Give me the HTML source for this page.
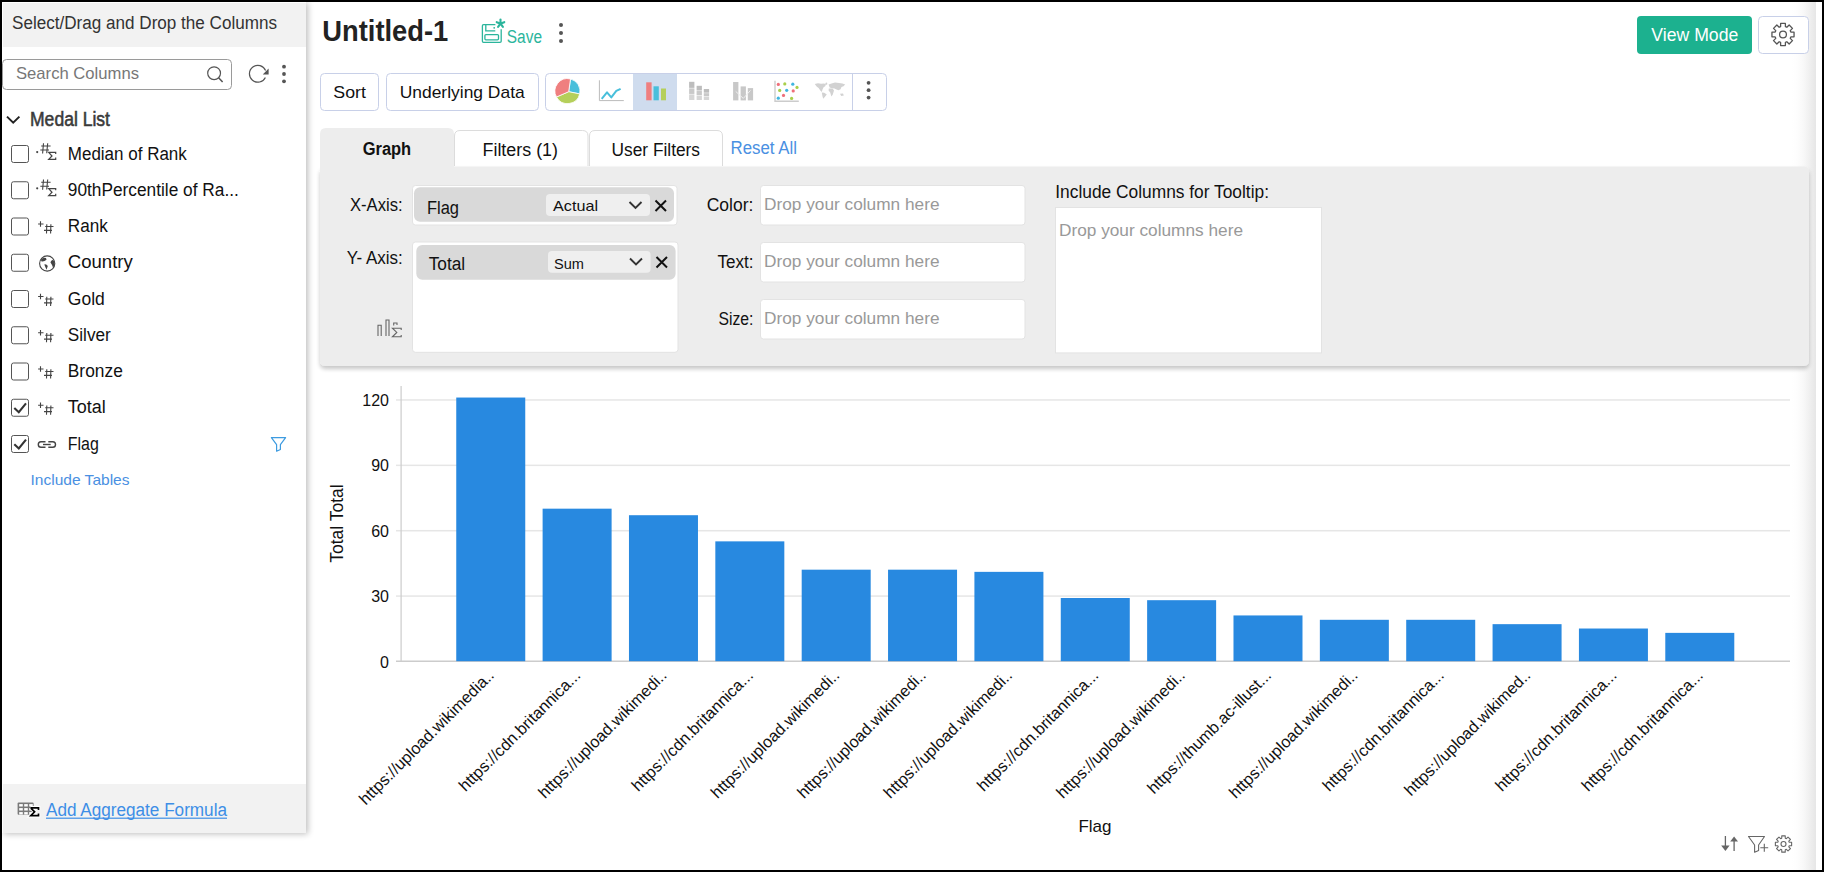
<!DOCTYPE html>
<html><head><meta charset="utf-8"><title>Untitled-1</title>
<style>html,body{margin:0;padding:0;width:1824px;height:872px;overflow:hidden;background:#000}
svg{display:block;font-family:"Liberation Sans", sans-serif}</style></head>
<body><svg width="1824" height="872" viewBox="0 0 1824 872">
<rect x="0" y="0" width="1824" height="872" rx="0" fill="#000" />
<rect x="2" y="2" width="1820" height="868" rx="0" fill="#fff" />
<defs><linearGradient id="shR" x1="0" x2="1" y1="0" y2="0"><stop offset="0" stop-color="#d6d6d6"/><stop offset="0.35" stop-color="#f2f2f2"/><stop offset="1" stop-color="#fff" stop-opacity="0"/></linearGradient><linearGradient id="shL" x1="0" x2="1" y1="0" y2="0"><stop offset="0" stop-color="#fff" stop-opacity="0"/><stop offset="0.55" stop-color="#f7f7f7"/><stop offset="1" stop-color="#e6e6e6"/></linearGradient><linearGradient id="shB" x1="0" x2="0" y1="0" y2="1"><stop offset="0" stop-color="#d0d0d0"/><stop offset="1" stop-color="#fff" stop-opacity="0"/></linearGradient></defs>
<filter id="lsh" x="-5%" y="-5%" width="115%" height="110%"><feGaussianBlur in="SourceAlpha" stdDeviation="3.2"/><feOffset dx="2" dy="1"/><feComponentTransfer><feFuncA type="linear" slope="0.26"/></feComponentTransfer><feMerge><feMergeNode/><feMergeNode in="SourceGraphic"/></feMerge></filter>
<rect x="2" y="2" width="304" height="831" rx="0" fill="#fff" filter="url(#lsh)"/>
<rect x="3" y="3" width="303" height="44" rx="0" fill="#f2f2f2" />
<text x="12" y="28.7" font-size="18" fill="#333" font-weight="normal" text-anchor="start" textLength="265" lengthAdjust="spacingAndGlyphs" >Select/Drag and Drop the Columns</text>
<rect x="2.5" y="59.5" width="229" height="30" rx="4" fill="#fff" stroke="#9a9a9a" stroke-width="1" />
<text x="16" y="79" font-size="17" fill="#777" font-weight="normal" text-anchor="start" textLength="123" lengthAdjust="spacingAndGlyphs" >Search Columns</text>
<circle cx="214.1" cy="73.2" r="6.4" fill="none" stroke="#555" stroke-width="1.2"/><path d="M218.6 77.7 L222.6 81.9" stroke="#555" stroke-width="1.5"/>
<path d="M265.6 70.6 A8.4 8.4 0 1 0 265.4 77.4" fill="none" stroke="#555" stroke-width="1.2"/><path d="M262.8 74.6 L268.6 68.4 L268.6 74.6 Z" fill="#555"/>
<circle cx="284" cy="66.65" r="1.9" fill="#555"/>
<circle cx="284" cy="74" r="1.9" fill="#555"/>
<circle cx="284" cy="81.35" r="1.9" fill="#555"/>
<path d="M7 116.6 L13.2 122.6 L19.4 116.6" fill="none" stroke="#222" stroke-width="2"/>
<text x="30" y="126" font-size="19.6" fill="#3a3a3a" font-weight="normal" text-anchor="start" textLength="80" lengthAdjust="spacingAndGlyphs" stroke="#3a3a3a" stroke-width="0.55">Medal List</text>
<rect x="11.5" y="145.5" width="17" height="17" rx="2" fill="#fff" stroke="#555" stroke-width="1" />
<text x="67.8" y="159.6" font-size="18" fill="#111" font-weight="normal" text-anchor="start" textLength="119" lengthAdjust="spacingAndGlyphs" >Median of Rank</text>
<rect x="11.5" y="181.75" width="17" height="17" rx="2" fill="#fff" stroke="#555" stroke-width="1" />
<text x="67.8" y="195.85" font-size="18" fill="#111" font-weight="normal" text-anchor="start" textLength="171" lengthAdjust="spacingAndGlyphs" >90thPercentile of Ra...</text>
<rect x="11.5" y="218.0" width="17" height="17" rx="2" fill="#fff" stroke="#555" stroke-width="1" />
<text x="67.8" y="232.1" font-size="18" fill="#111" font-weight="normal" text-anchor="start" textLength="40" lengthAdjust="spacingAndGlyphs" >Rank</text>
<rect x="11.5" y="254.25" width="17" height="17" rx="2" fill="#fff" stroke="#555" stroke-width="1" />
<text x="67.8" y="268.35" font-size="18" fill="#111" font-weight="normal" text-anchor="start" textLength="65" lengthAdjust="spacingAndGlyphs" >Country</text>
<rect x="11.5" y="290.5" width="17" height="17" rx="2" fill="#fff" stroke="#555" stroke-width="1" />
<text x="67.8" y="304.6" font-size="18" fill="#111" font-weight="normal" text-anchor="start" textLength="37" lengthAdjust="spacingAndGlyphs" >Gold</text>
<rect x="11.5" y="326.75" width="17" height="17" rx="2" fill="#fff" stroke="#555" stroke-width="1" />
<text x="67.8" y="340.85" font-size="18" fill="#111" font-weight="normal" text-anchor="start" textLength="43" lengthAdjust="spacingAndGlyphs" >Silver</text>
<rect x="11.5" y="363.0" width="17" height="17" rx="2" fill="#fff" stroke="#555" stroke-width="1" />
<text x="67.8" y="377.1" font-size="18" fill="#111" font-weight="normal" text-anchor="start" textLength="55" lengthAdjust="spacingAndGlyphs" >Bronze</text>
<rect x="11.5" y="399.25" width="17" height="17" rx="2" fill="#fff" stroke="#555" stroke-width="1" />
<path d="M14.3 407.95 L18.8 412.15 L26 403.45" fill="none" stroke="#333" stroke-width="2.1"/>
<text x="67.8" y="413.35" font-size="18" fill="#111" font-weight="normal" text-anchor="start" textLength="38" lengthAdjust="spacingAndGlyphs" >Total</text>
<rect x="11.5" y="435.5" width="17" height="17" rx="2" fill="#fff" stroke="#555" stroke-width="1" />
<path d="M14.3 444.2 L18.8 448.4 L26 439.7" fill="none" stroke="#333" stroke-width="2.1"/>
<text x="67.8" y="449.6" font-size="18" fill="#111" font-weight="normal" text-anchor="start" textLength="31" lengthAdjust="spacingAndGlyphs" >Flag</text>
<text x="30.5" y="484.6" font-size="15" fill="#4a90e2" font-weight="normal" text-anchor="start" textLength="99" lengthAdjust="spacingAndGlyphs" >Include Tables</text>
<rect x="3" y="784" width="303" height="49" rx="0" fill="#f2f2f2" />
<text x="46" y="816" font-size="18" fill="#3d8ee6" font-weight="normal" text-anchor="start" textLength="181" lengthAdjust="spacingAndGlyphs" >Add Aggregate Formula</text>
<rect x="46" y="817.6" width="181" height="1.2" fill="#3d8ee6"/>
<rect x="1790" y="2" width="26" height="868" rx="0" fill="url(#shL)" />
<text x="322.3" y="40.6" font-size="29" fill="#222" font-weight="bold" text-anchor="start" textLength="126" lengthAdjust="spacingAndGlyphs" >Untitled-1</text>
<text x="506.8" y="42.9" font-size="18" fill="#2bb59c" font-weight="normal" text-anchor="start" textLength="35.2" lengthAdjust="spacingAndGlyphs" >Save</text>
<circle cx="561" cy="25" r="2" fill="#555"/>
<circle cx="561" cy="33" r="2" fill="#555"/>
<circle cx="561" cy="41" r="2" fill="#555"/>
<rect x="1637" y="16" width="115" height="38" rx="4" fill="#1cb18f" />
<text x="1651.3" y="41" font-size="18" fill="#fff" font-weight="normal" text-anchor="start" textLength="87" lengthAdjust="spacingAndGlyphs" >View Mode</text>
<rect x="1758.5" y="16.5" width="50" height="37" rx="4" fill="#fff" stroke="#c8d0e8" stroke-width="1" />
<rect x="320.5" y="73.5" width="58" height="37" rx="4" fill="#fff" stroke="#c8d0e8" stroke-width="1" />
<text x="333.3" y="97.7" font-size="17" fill="#111" font-weight="normal" text-anchor="start" textLength="32.6" lengthAdjust="spacingAndGlyphs" >Sort</text>
<rect x="386.5" y="73.5" width="152" height="37" rx="4" fill="#fff" stroke="#c8d0e8" stroke-width="1" />
<text x="399.7" y="97.7" font-size="17" fill="#111" font-weight="normal" text-anchor="start" textLength="125" lengthAdjust="spacingAndGlyphs" >Underlying Data</text>
<rect x="545.5" y="73.5" width="341" height="37" rx="4" fill="#fff" stroke="#c8d0e8" stroke-width="1" />
<rect x="633" y="74" width="44" height="36" rx="0" fill="#cfdcee" />
<rect x="852" y="74" width="1" height="36" fill="#c8d0e8"/>
<circle cx="868.6" cy="82.8" r="1.9" fill="#555"/>
<circle cx="868.6" cy="90.2" r="1.9" fill="#555"/>
<circle cx="868.6" cy="97.60000000000001" r="1.9" fill="#555"/>
<path d="M320 166 L320 134 Q320 128 326 128 L448 128 Q454 128 454 134 L454 166 Z" fill="#ededed"/>
<path d="M454.5 166 L454.5 136 Q454.5 130.5 460 130.5 L582.5 130.5 Q588 130.5 588 136 L588 166" fill="#fff" stroke="#dcdcdc"/>
<path d="M589.5 166 L589.5 136 Q589.5 130.5 595 130.5 L717 130.5 Q722.5 130.5 722.5 136 L722.5 166" fill="#fff" stroke="#dcdcdc"/>
<text x="362.7" y="155" font-size="18" fill="#111" font-weight="bold" text-anchor="start" textLength="48.5" lengthAdjust="spacingAndGlyphs" >Graph</text>
<text x="482.5" y="155.5" font-size="18" fill="#111" font-weight="normal" text-anchor="start" textLength="75.5" lengthAdjust="spacingAndGlyphs" >Filters (1)</text>
<text x="611.6" y="155.5" font-size="18" fill="#111" font-weight="normal" text-anchor="start" textLength="88.4" lengthAdjust="spacingAndGlyphs" >User Filters</text>
<text x="730.5" y="154" font-size="18" fill="#4a90e2" font-weight="normal" text-anchor="start" textLength="66.5" lengthAdjust="spacingAndGlyphs" >Reset All</text>
<defs><filter id="psh" x="-1%" y="-5%" width="102%" height="115%"><feGaussianBlur in="SourceAlpha" stdDeviation="2"/><feOffset dy="2.5"/><feComponentTransfer><feFuncA type="linear" slope="0.22"/></feComponentTransfer><feMerge><feMergeNode/><feMergeNode in="SourceGraphic"/></feMerge></filter></defs>
<rect x="320" y="166.5" width="1489" height="199.5" rx="5" fill="#ededed" filter="url(#psh)"/>
<rect x="320" y="160" width="134" height="12" fill="#ededed"/>
<text x="350" y="211.2" font-size="18" fill="#111" font-weight="normal" text-anchor="start" textLength="52.6" lengthAdjust="spacingAndGlyphs" >X-Axis:</text>
<rect x="412.5" y="185.5" width="264.5" height="39.5" rx="3" fill="#fff" stroke="#e3e3e3" stroke-width="1" />
<rect x="414" y="187.3" width="260" height="34.5" rx="6" fill="#d9d9d9" />
<text x="427" y="213.5" font-size="18" fill="#111" font-weight="normal" text-anchor="start" textLength="32" lengthAdjust="spacingAndGlyphs" >Flag</text>
<rect x="546" y="194" width="104" height="22" rx="4" fill="#efefef" />
<text x="553" y="211" font-size="15" fill="#111" font-weight="normal" text-anchor="start" textLength="45" lengthAdjust="spacingAndGlyphs" >Actual</text>
<path d="M629.5 202 L635.5 208 L641.5 202" fill="none" stroke="#333" stroke-width="1.9"/>
<path d="M655.5 200.5 L666 211 M666 200.5 L655.5 211" stroke="#111" stroke-width="2"/>
<text x="346.8" y="263.8" font-size="18" fill="#111" font-weight="normal" text-anchor="start" textLength="56" lengthAdjust="spacingAndGlyphs" >Y- Axis:</text>
<rect x="412.5" y="242" width="265.5" height="110.3" rx="3" fill="#fff" stroke="#e3e3e3" stroke-width="1" />
<rect x="416.3" y="245" width="259.3" height="34.8" rx="6" fill="#d9d9d9" />
<text x="428.7" y="270" font-size="18" fill="#111" font-weight="normal" text-anchor="start" textLength="36.5" lengthAdjust="spacingAndGlyphs" >Total</text>
<rect x="548" y="251" width="102.6" height="21.8" rx="4" fill="#efefef" />
<text x="554" y="268.5" font-size="15" fill="#111" font-weight="normal" text-anchor="start" textLength="30" lengthAdjust="spacingAndGlyphs" >Sum</text>
<path d="M630 258.5 L636 264.5 L642 258.5" fill="none" stroke="#333" stroke-width="1.9"/>
<path d="M656.5 257 L667 267.5 M667 257 L656.5 267.5" stroke="#111" stroke-width="2"/>
<text x="706.7" y="211" font-size="18" fill="#111" font-weight="normal" text-anchor="start" textLength="46.7" lengthAdjust="spacingAndGlyphs" >Color:</text>
<text x="717.5" y="268" font-size="18" fill="#111" font-weight="normal" text-anchor="start" textLength="36" lengthAdjust="spacingAndGlyphs" >Text:</text>
<text x="718.5" y="325" font-size="18" fill="#111" font-weight="normal" text-anchor="start" textLength="35" lengthAdjust="spacingAndGlyphs" >Size:</text>
<rect x="760.5" y="185.5" width="264.5" height="39.5" rx="3" fill="#fff" stroke="#e3e3e3" stroke-width="1" />
<text x="764" y="210.2" font-size="17" fill="#999" font-weight="normal" text-anchor="start" textLength="175.5" lengthAdjust="spacingAndGlyphs" >Drop your column here</text>
<rect x="760.5" y="242.5" width="264.5" height="39.5" rx="3" fill="#fff" stroke="#e3e3e3" stroke-width="1" />
<text x="764" y="267.2" font-size="17" fill="#999" font-weight="normal" text-anchor="start" textLength="175.5" lengthAdjust="spacingAndGlyphs" >Drop your column here</text>
<rect x="760.5" y="299.5" width="264.5" height="39.5" rx="3" fill="#fff" stroke="#e3e3e3" stroke-width="1" />
<text x="764" y="324.2" font-size="17" fill="#999" font-weight="normal" text-anchor="start" textLength="175.5" lengthAdjust="spacingAndGlyphs" >Drop your column here</text>
<text x="1055.3" y="197.8" font-size="18" fill="#111" font-weight="normal" text-anchor="start" textLength="213.7" lengthAdjust="spacingAndGlyphs" >Include Columns for Tooltip:</text>
<rect x="1055.5" y="207.5" width="266" height="145.4" rx="0" fill="#fff" stroke="#e3e3e3" stroke-width="1" />
<text x="1059" y="236" font-size="17" fill="#999" font-weight="normal" text-anchor="start" textLength="184" lengthAdjust="spacingAndGlyphs" >Drop your columns here</text>
<text x="389" y="667.5" font-size="16" fill="#111" font-weight="normal" text-anchor="end" >0</text>
<rect x="396" y="595.33" width="1394" height="1.5" rx="0" fill="#e6e6e6" />
<text x="389" y="602.13" font-size="16" fill="#111" font-weight="normal" text-anchor="end" >30</text>
<rect x="396" y="529.96" width="1394" height="1.5" rx="0" fill="#e6e6e6" />
<text x="389" y="536.76" font-size="16" fill="#111" font-weight="normal" text-anchor="end" >60</text>
<rect x="396" y="464.59000000000003" width="1394" height="1.5" rx="0" fill="#e6e6e6" />
<text x="389" y="471.39000000000004" font-size="16" fill="#111" font-weight="normal" text-anchor="end" >90</text>
<rect x="396" y="399.2200000000001" width="1394" height="1.5" rx="0" fill="#e6e6e6" />
<text x="389" y="406.0200000000001" font-size="16" fill="#111" font-weight="normal" text-anchor="end" >120</text>
<rect x="400.5" y="386" width="1.2" height="275.5" rx="0" fill="#ccc" />
<rect x="396" y="660.5" width="1394" height="1.5" rx="0" fill="#ccc" />
<rect x="456.25" y="397.54" width="69" height="263.66" rx="0" fill="#2889e0" />
<text x="495.05" y="676.4" font-size="16.3" fill="#111" text-anchor="end" transform="rotate(-45 495.05 676.4)">https://upload.wikimedia..</text>
<rect x="542.61" y="508.67" width="69" height="152.53" rx="0" fill="#2889e0" />
<text x="581.41" y="676.4" font-size="16.3" fill="#111" text-anchor="end" transform="rotate(-45 581.41 676.4)">https://cdn.britannica...</text>
<rect x="628.97" y="515.21" width="69" height="145.99" rx="0" fill="#2889e0" />
<text x="667.77" y="676.4" font-size="16.3" fill="#111" text-anchor="end" transform="rotate(-45 667.77 676.4)">https://upload.wikimedi..</text>
<rect x="715.33" y="541.36" width="69" height="119.84" rx="0" fill="#2889e0" />
<text x="754.13" y="676.4" font-size="16.3" fill="#111" text-anchor="end" transform="rotate(-45 754.13 676.4)">https://cdn.britannica...</text>
<rect x="801.69" y="569.68" width="69" height="91.52" rx="0" fill="#2889e0" />
<text x="840.49" y="676.4" font-size="16.3" fill="#111" text-anchor="end" transform="rotate(-45 840.49 676.4)">https://upload.wikimedi..</text>
<rect x="888.05" y="569.68" width="69" height="91.52" rx="0" fill="#2889e0" />
<text x="926.85" y="676.4" font-size="16.3" fill="#111" text-anchor="end" transform="rotate(-45 926.85 676.4)">https://upload.wikimedi..</text>
<rect x="974.41" y="571.86" width="69" height="89.34" rx="0" fill="#2889e0" />
<text x="1013.21" y="676.4" font-size="16.3" fill="#111" text-anchor="end" transform="rotate(-45 1013.21 676.4)">https://upload.wikimedi..</text>
<rect x="1060.77" y="598.01" width="69" height="63.19" rx="0" fill="#2889e0" />
<text x="1099.57" y="676.4" font-size="16.3" fill="#111" text-anchor="end" transform="rotate(-45 1099.57 676.4)">https://cdn.britannica...</text>
<rect x="1147.13" y="600.19" width="69" height="61.01" rx="0" fill="#2889e0" />
<text x="1185.93" y="676.4" font-size="16.3" fill="#111" text-anchor="end" transform="rotate(-45 1185.93 676.4)">https://upload.wikimedi..</text>
<rect x="1233.49" y="615.44" width="69" height="45.76" rx="0" fill="#2889e0" />
<text x="1272.29" y="676.4" font-size="16.3" fill="#111" text-anchor="end" transform="rotate(-45 1272.29 676.4)">https://thumb.ac-illust...</text>
<rect x="1319.85" y="619.8" width="69" height="41.4" rx="0" fill="#2889e0" />
<text x="1358.65" y="676.4" font-size="16.3" fill="#111" text-anchor="end" transform="rotate(-45 1358.65 676.4)">https://upload.wikimedi..</text>
<rect x="1406.21" y="619.8" width="69" height="41.4" rx="0" fill="#2889e0" />
<text x="1445.01" y="676.4" font-size="16.3" fill="#111" text-anchor="end" transform="rotate(-45 1445.01 676.4)">https://cdn.britannica...</text>
<rect x="1492.57" y="624.16" width="69" height="37.04" rx="0" fill="#2889e0" />
<text x="1531.37" y="676.4" font-size="16.3" fill="#111" text-anchor="end" transform="rotate(-45 1531.37 676.4)">https://upload.wikimed..</text>
<rect x="1578.93" y="628.52" width="69" height="32.68" rx="0" fill="#2889e0" />
<text x="1617.73" y="676.4" font-size="16.3" fill="#111" text-anchor="end" transform="rotate(-45 1617.73 676.4)">https://cdn.britannica...</text>
<rect x="1665.29" y="632.87" width="69" height="28.33" rx="0" fill="#2889e0" />
<text x="1704.09" y="676.4" font-size="16.3" fill="#111" text-anchor="end" transform="rotate(-45 1704.09 676.4)">https://cdn.britannica...</text>
<text x="342.6" y="523.6" font-size="18" fill="#111" text-anchor="middle" textLength="78.5" lengthAdjust="spacingAndGlyphs" transform="rotate(-90 342.6 523.6)">Total Total</text>
<text x="1095" y="832" font-size="17" fill="#111" font-weight="normal" text-anchor="middle" >Flag</text>
<path d="M1780.58 26.67 L1780.64 23.45 L1785.36 23.45 L1785.42 26.67 L1786.83 27.25 L1789.15 25.02 L1792.48 28.35 L1790.25 30.67 L1790.83 32.08 L1794.05 32.14 L1794.05 36.86 L1790.83 36.92 L1790.25 38.33 L1792.48 40.65 L1789.15 43.98 L1786.83 41.75 L1785.42 42.33 L1785.36 45.55 L1780.64 45.55 L1780.58 42.33 L1779.17 41.75 L1776.85 43.98 L1773.52 40.65 L1775.75 38.33 L1775.17 36.92 L1771.95 36.86 L1771.95 32.14 L1775.17 32.08 L1775.75 30.67 L1773.52 28.35 L1776.85 25.02 L1779.17 27.25 Z" fill="none" stroke="#555" stroke-width="1.3" stroke-linejoin="round"/>
<circle cx="1783" cy="34.5" r="3.4" fill="none" stroke="#555" stroke-width="1.3"/>
<path d="M1781.73 838.27 L1781.77 835.88 L1785.23 835.88 L1785.27 838.27 L1786.30 838.69 L1788.02 837.04 L1790.46 839.48 L1788.81 841.20 L1789.23 842.23 L1791.62 842.27 L1791.62 845.73 L1789.23 845.77 L1788.81 846.80 L1790.46 848.52 L1788.02 850.96 L1786.30 849.31 L1785.27 849.73 L1785.23 852.12 L1781.77 852.12 L1781.73 849.73 L1780.70 849.31 L1778.98 850.96 L1776.54 848.52 L1778.19 846.80 L1777.77 845.77 L1775.38 845.73 L1775.38 842.27 L1777.77 842.23 L1778.19 841.20 L1776.54 839.48 L1778.98 837.04 L1780.70 838.69 Z" fill="none" stroke="#666" stroke-width="1.1" stroke-linejoin="round"/>
<circle cx="1783.5" cy="844" r="2.5" fill="none" stroke="#666" stroke-width="1.1"/>
<path d="M1725.4 836 L1725.4 846" stroke="#666" stroke-width="1.3"/><path d="M1721.2 845.5 L1729.6 845.5 L1725.4 851 Z" fill="#666"/>
<path d="M1734.1 851 L1734.1 841" stroke="#666" stroke-width="1.3"/><path d="M1730.2 841.5 L1738 841.5 L1734.1 836.5 Z" fill="#666"/>
<path d="M1748.5 836.5 L1764.5 836.5 L1758.6 845 L1758.6 850.5 L1754.6 852.3 L1754.6 845 Z" fill="none" stroke="#666" stroke-width="1.1" stroke-linejoin="round"/>
<path d="M1760.3 847.7 L1768.2 847.7 M1764.3 843.8 L1764.3 851.7" stroke="#666" stroke-width="1.1"/>
<path d="M271.4 437.6 L285.6 437.6 L280.4 444.7 L280.4 449.5 L276.6 451.2 L276.6 444.7 Z" fill="none" stroke="#3d9be0" stroke-width="1.2" stroke-linejoin="round"/>
<g fill="none" stroke="#2bb59c" stroke-width="1.3"><path d="M495.4 24.7 L483.5 24.7 Q482.4 24.7 482.4 25.8 L482.4 41.3 Q482.4 42.4 483.5 42.4 L500 42.4 Q501.2 42.4 501.2 41.3 L501.2 29.3"/><path d="M485.8 25 L485.8 30.8 L495.3 30.8"/><rect x="484.9" y="34.6" width="13.6" height="5.2" rx="1"/></g><circle cx="494.2" cy="27.8" r="0.9" fill="#2bb59c"/>
<g stroke="#2bb59c" fill="none" stroke-width="2.1" stroke-linecap="round"><path d="M500.5 19.6 L500.5 23.6"/><path d="M496.7 22.2 L500.5 23.6 L504.3 22.2"/><path d="M498.1 26.9 L500.5 23.6 L502.9 26.9"/></g>
<rect x="17.6" y="802.5" width="16" height="12.3" rx="1" fill="#7a7a7a"/>
<rect x="19.2" y="804.1" width="3.6" height="2.4" fill="#fff"/>
<rect x="19.2" y="808.1" width="3.6" height="2.4" fill="#fff"/>
<rect x="19.2" y="812.1" width="3.6" height="2.4" fill="#fff"/>
<rect x="24.2" y="804.1" width="3.6" height="2.4" fill="#fff"/>
<rect x="24.2" y="808.1" width="3.6" height="2.4" fill="#fff"/>
<rect x="24.2" y="812.1" width="3.6" height="2.4" fill="#fff"/>
<rect x="29.2" y="804.1" width="3.6" height="2.4" fill="#fff"/>
<rect x="29.2" y="808.1" width="3.6" height="2.4" fill="#fff"/>
<rect x="29.2" y="812.1" width="3.6" height="2.4" fill="#fff"/>
<path d="M30.5 807.8 L38.5 807.8 L38.5 810 M30.8 808.2 L34.6 811.8 L30.8 815.6 L38.5 815.6 L38.5 813.4" fill="none" stroke="#fff" stroke-width="3.6" stroke-linejoin="miter"/><path d="M30.5 807.8 L38.5 807.8 L38.5 810 M30.8 808.2 L34.6 811.8 L30.8 815.6 L38.5 815.6 L38.5 813.4" fill="none" stroke="#000" stroke-width="1.7" stroke-linejoin="miter"/>
<circle cx="37.2" cy="152.1" r="1.1" fill="#444"/>
<g stroke="#444" stroke-width="1.1"><path d="M43.5 143.2 L42.6 153.5 M47.7 143.2 L46.7 153.2 M41.2 146.0 L50.6 146.0 M40.3 150.0 L49 150.0"/></g>
<path d="M55.7 154.0 L55.7 152.4 L48.7 152.4 L52 156.0 L48.7 159.4 L55.7 159.4 L55.7 157.6" fill="none" stroke="#444" stroke-width="1.2"/>
<circle cx="37.2" cy="188.35" r="1.1" fill="#444"/>
<g stroke="#444" stroke-width="1.1"><path d="M43.5 179.45 L42.6 189.75 M47.7 179.45 L46.7 189.45 M41.2 182.25 L50.6 182.25 M40.3 186.25 L49 186.25"/></g>
<path d="M55.7 190.25 L55.7 188.65 L48.7 188.65 L52 192.25 L48.7 195.65 L55.7 195.65 L55.7 193.85" fill="none" stroke="#444" stroke-width="1.2"/>
<g stroke="#444" stroke-width="1.1"><path d="M38.1 224.0 L43.5 224.0 M40.5 221.3 L40.5 226.8"/><path d="M46.8 224.2 L46.5 233.5 M50.9 224.2 L50.6 233.5 M45.2 226.5 L53.5 226.5 M44 230.4 L52 230.4"/></g>
<circle cx="47.2" cy="263.5" r="7.6" fill="none" stroke="#444" stroke-width="1.1"/>
<path d="M41 259.5 Q43 257.2 46 258.0 L46.5 259.8 Q44 262.0 41.3 261.3 Z" fill="#444"/>
<path d="M44.3 264.4 Q46.8 264.0 47.8 266.0 L46.5 269.8 Q45.4 267.0 44.3 264.4 Z" fill="#444"/>
<path d="M50.4 262.3 Q51.8 259.5 53 260.0 L54.6 261.5 Q54.5 266.0 53.3 268.2 Q52 264.5 50.4 262.3 Z" fill="#444"/>
<g stroke="#444" stroke-width="1.1"><path d="M38.1 296.5 L43.5 296.5 M40.5 293.8 L40.5 299.3"/><path d="M46.8 296.7 L46.5 306.0 M50.9 296.7 L50.6 306.0 M45.2 299.0 L53.5 299.0 M44 302.9 L52 302.9"/></g>
<g stroke="#444" stroke-width="1.1"><path d="M38.1 332.75 L43.5 332.75 M40.5 330.05 L40.5 335.55"/><path d="M46.8 332.95 L46.5 342.25 M50.9 332.95 L50.6 342.25 M45.2 335.25 L53.5 335.25 M44 339.15 L52 339.15"/></g>
<g stroke="#444" stroke-width="1.1"><path d="M38.1 369.0 L43.5 369.0 M40.5 366.3 L40.5 371.8"/><path d="M46.8 369.2 L46.5 378.5 M50.9 369.2 L50.6 378.5 M45.2 371.5 L53.5 371.5 M44 375.4 L52 375.4"/></g>
<g stroke="#444" stroke-width="1.1"><path d="M38.1 405.25 L43.5 405.25 M40.5 402.55 L40.5 408.05"/><path d="M46.8 405.45 L46.5 414.75 M50.9 405.45 L50.6 414.75 M45.2 407.75 L53.5 407.75 M44 411.65 L52 411.65"/></g>
<g fill="none" stroke="#444" stroke-width="1.4"><path d="M45.5 441.7 L41 441.7 Q38.3 441.7 38.3 444.5 Q38.3 447.3 41 447.3 L45.5 447.3"/><path d="M48.3 441.7 L52.8 441.7 Q55.5 441.7 55.5 444.5 Q55.5 447.3 52.8 447.3 L48.3 447.3"/><path d="M43 444.5 L50.7 444.5"/></g>
<g fill="none" stroke="#666" stroke-width="1.1"><path d="M378 336 L378 325.3 L381.2 325.3 L381.2 336"/><path d="M386 336 L386 320 L389 320 L389 336"/><path d="M393.7 325.6 L393.7 323 L397 323 L397 325"/><path d="M401.2 330 L401.2 328.2 L392.4 328.2 L396.8 332.4 L392.4 336.8 L401.2 336.8 L401.2 335"/></g>
<path d="M568.7 91.7 L570.52 78.97 A12.5 12.5 0 0 1 579.68 93.91 Z" fill="#48bfdb" stroke="#fff" stroke-width="0.8"/>
<path d="M568.7 91.7 L579.68 93.91 A12.5 12.5 0 0 1 556.46 96.97 Z" fill="#b5cf5a" stroke="#fff" stroke-width="0.8"/>
<path d="M568.7 91.7 L556.46 96.97 A12.5 12.5 0 0 1 570.52 78.97 Z" fill="#ef7f7f" stroke="#fff" stroke-width="0.8"/>
<path d="M599.4 80.3 L599.4 100.6 L623.8 100.6" fill="none" stroke="#bbb" stroke-width="1"/>
<path d="M601.7 98.9 L607 92.4 L611.3 97.4 L616.3 90.9 L620.6 88.8" fill="none" stroke="#48bfdb" stroke-width="2" stroke-linejoin="round"/>
<rect x="646.2" y="82.3" width="5.4" height="18" fill="#ef7f7f"/><rect x="653.5" y="86.3" width="5.3" height="14" fill="#48bfdb"/><rect x="661" y="88.5" width="5" height="11.8" fill="#b5cf5a"/>
<rect x="689.1" y="81.8" width="5.3" height="6.07" fill="#bdbdbd"/><rect x="689.1" y="88.37" width="5.3" height="5.57" fill="#c9c9c9"/><rect x="689.1" y="94.43" width="5.3" height="5.57" fill="#d6d6d6"/>
<rect x="696.6" y="85.8" width="5.3" height="4.73" fill="#bdbdbd"/><rect x="696.6" y="91.03" width="5.3" height="4.23" fill="#c9c9c9"/><rect x="696.6" y="95.77" width="5.3" height="4.23" fill="#d6d6d6"/>
<rect x="703.8" y="89" width="5.3" height="3.67" fill="#bdbdbd"/><rect x="703.8" y="93.17" width="5.3" height="3.17" fill="#c9c9c9"/><rect x="703.8" y="96.83" width="5.3" height="3.17" fill="#d6d6d6"/>
<rect x="733.1" y="82" width="5.3" height="18.40" fill="#c8c8c8"/>
<rect x="740.6" y="86.4" width="5.3" height="14.00" fill="#c8c8c8"/>
<rect x="747.8" y="88.1" width="5.3" height="12.30" fill="#c8c8c8"/>
<path d="M735.7 91.4 L743.3 98.4 L750.5 90.4" fill="none" stroke="#eee" stroke-width="1"/>
<path d="M775 80.7 L775 101.2 L798.8 101.2" fill="none" stroke="#ccc" stroke-width="1.4"/>
<circle cx="778.3" cy="84.4" r="1.6" fill="#ef6f7a"/>
<circle cx="784.8" cy="83.9" r="1.6" fill="#a9cf4a"/>
<circle cx="792.8" cy="84.2" r="1.6" fill="#3fb6e0"/>
<circle cx="797" cy="87.4" r="1.6" fill="#a9cf4a"/>
<circle cx="779.7" cy="90.4" r="1.6" fill="#a9cf4a"/>
<circle cx="786.7" cy="90.3" r="1.6" fill="#3fb6e0"/>
<circle cx="793.2" cy="90.9" r="1.6" fill="#ef6f7a"/>
<circle cx="783.5" cy="95.4" r="1.6" fill="#ef6f7a"/>
<circle cx="778.3" cy="98.2" r="1.6" fill="#3fb6e0"/>
<circle cx="791.6" cy="98.4" r="1.6" fill="#a9cf4a"/>
<g fill="#d2d2d2"><path d="M814.8 84 L818 83.2 L821 83.8 L824 83.4 L826 84.3 L825.2 86.2 L823.6 87.2 L822.6 89.3 L821.8 92 L820.3 90.6 L818.6 88 L816.6 86.6 Z"/><path d="M825.2 83 L827 82.6 L827.4 84.2 L826 85 Z"/><path d="M821.8 92.6 L824.2 92.8 L826.8 94.4 L825.2 96.4 L823.2 98.8 L822.4 96 Z"/><path d="M828.6 84.6 L831.5 83.4 L835 82.6 L839 83 L842.5 83.6 L845.2 84.6 L843.5 86.2 L841.5 87 L840.5 89.2 L838.5 90.2 L836.5 89.4 L834.5 88.6 L832 88.2 L829.6 87.6 Z"/><path d="M828.8 88.4 L832.6 88.6 L834 90.6 L832.8 94.6 L831.4 96.6 L830.2 92.6 L828.6 90.4 Z"/><path d="M840 93.8 L843 93.4 L843.8 95.6 L841.2 96 Z"/></g>
</svg></body></html>
